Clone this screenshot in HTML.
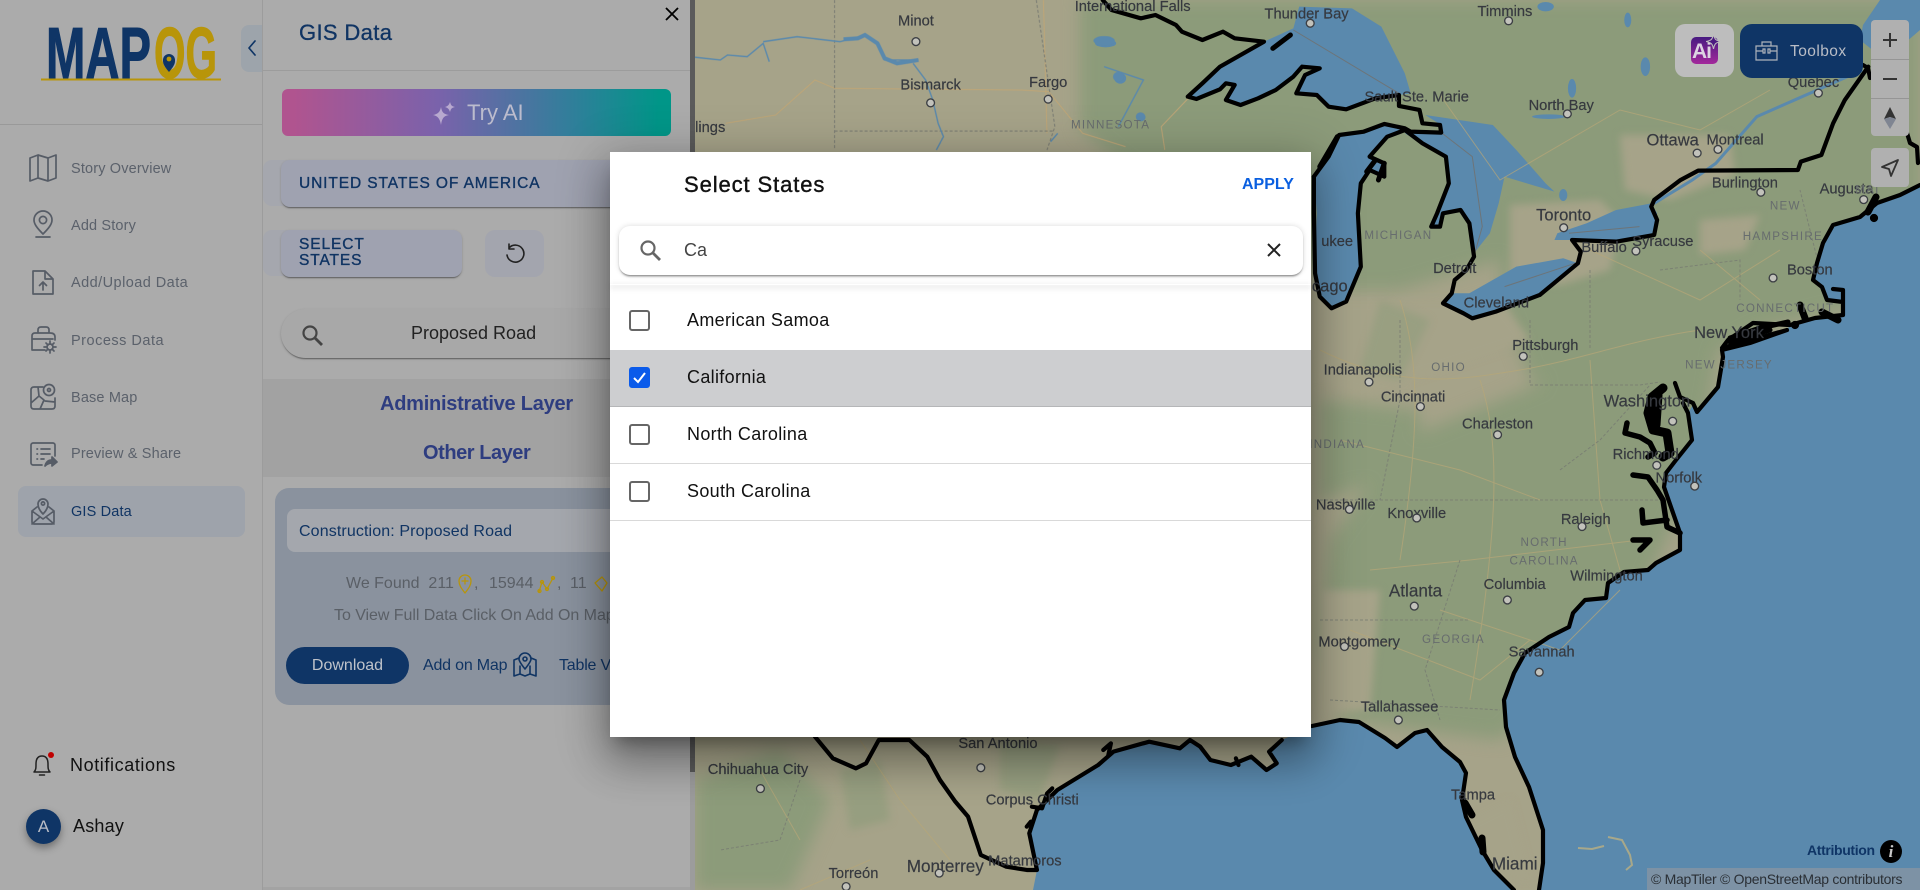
<!DOCTYPE html>
<html><head><meta charset="utf-8"><title>MAPOG GIS Data</title>
<style>
*{box-sizing:border-box}
html,body{margin:0;padding:0;width:1920px;height:890px;overflow:hidden;background:#ababab;font-family:"Liberation Sans",sans-serif}
.a{position:absolute}
.t{position:absolute;white-space:nowrap;line-height:24px;height:24px}
.nav{color:#5b616b;font-size:14.5px;left:71px;letter-spacing:.15px}
svg.i{position:absolute;fill:none;stroke:#565c66;stroke-width:1.7;stroke-linecap:round;stroke-linejoin:round}
.btn{position:absolute;background:#9fa2b0;border-radius:9px;box-shadow:0 2px 1px -1px #666,0 1px 2px #888}
.sl{position:absolute;background:#a5a7ae;border-radius:9px 0 0 9px}
.st{color:#103463;font-size:15.5px;-webkit-text-stroke:.35px #103463;letter-spacing:.9px}
.cb{position:absolute;left:629px;width:21px;height:21px;border:2px solid #666;border-radius:3px;background:#fff}
.row{position:absolute;left:610px;width:701px;height:57px;border-bottom:1px solid #d9d9d9}
.rt{left:687px;font-size:18px;color:#111;letter-spacing:.32px}
svg text{font-family:"Liberation Sans",sans-serif}
.c{font-size:12px;fill:#36393f;text-anchor:middle;stroke:#36393f;stroke-width:.15px}
.s{font-size:9.5px;fill:#676c6e;text-anchor:middle;letter-spacing:1px}
</style></head><body>

<svg class="a" style="left:0;top:0" width="1920" height="890" viewBox="0 0 1920 890">
<defs>
<filter id="b" x="-20%" y="-20%" width="140%" height="140%" color-interpolation-filters="sRGB"><feGaussianBlur stdDeviation="8"/></filter>
<filter id="b2" x="-20%" y="-20%" width="140%" height="140%" color-interpolation-filters="sRGB"><feGaussianBlur stdDeviation="4"/></filter>
</defs>
<rect x="695" y="0" width="1225" height="890" fill="#a6a389"/>
<g filter="url(#b)" fill="#8c9b7a">
<path d="M1080 0H1920V290L1760 330L1640 390L1530 380L1500 300L1500 260L1400 290L1330 290L1240 190L1130 170L1080 130Z"/>
<path d="M1400 440L1500 400L1620 350L1720 340L1700 460L1640 600L1560 680L1520 720L1500 740L1340 720L1320 640L1330 540Z"/>
<path d="M695 780L780 750L830 800L790 890H695Z"/>
<path d="M1320 400L1420 410L1420 470L1320 500Z"/>
</g>
<g filter="url(#b2)" fill="#a6a389">
<path d="M1510 205L1600 200L1620 220L1610 270L1560 285L1510 280Z"/>
<path d="M1620 135L1730 135L1735 175L1670 200L1625 190Z"/>
<path d="M1330 300L1500 300L1530 340L1440 370L1360 395L1320 380Z"/>
<path d="M1320 590L1380 590L1370 710L1320 715Z"/>
<path d="M1450 830L1510 800L1530 880L1470 870Z"/>
<path d="M1700 220L1760 215L1745 250L1700 255Z"/>
</g>
<g filter="url(#b2)" fill="#8c9b7a">
<path d="M1000 740L1060 745L1040 800L1000 790Z" opacity=".6"/>
<path d="M840 770L880 760L890 820L850 830Z" opacity=".6"/>
<path d="M1380 300L1430 320L1400 380L1360 370Z" opacity=".5"/>
</g>
<!-- oceans -->
<path fill="#5a89ad" d="M1920 185L1900 195L1877 203L1860 217L1833 225L1823 243L1817 263L1813 280L1822 287L1827 300L1843 302L1843 315L1815 318L1790 325L1787 330L1750 343L1722 350L1723 357L1718 387L1697 412L1693 405L1688 413L1692 440L1676 460L1666 473L1664 487L1672 510L1680 533L1680 550L1656 563L1648 570L1624 572L1608 583L1606 598L1585 600L1573 613L1569 627L1549 637L1525 653L1514 673L1504 700L1506 727L1515 757L1529 787L1543 830L1543 863L1539 890H1920Z"/>
<path fill="#5a89ad" d="M1514 890L1494 870L1482 850L1466 817L1462 800L1466 773L1460 762L1442 747L1427 730L1415 733L1397 747L1385 738L1359 722L1340 720L1312 726L1282 740L1269 752L1277 763L1267 770L1251 757L1231 765L1210 760L1200 747L1190 740L1180 748L1149 742L1113 752L1098 765L1057 790L1037 810L1029 833L1037 870L1033 890Z"/>
<path fill="#5a89ad" d="M1880 0H1920V30L1885 60L1860 40L1863 25Z"/>

<g transform="translate(1000,0) scale(.5867,.3333)">
<path fill="#5a89ad" d="M450 125L500 85L510 20L600 25L650 80L690 220L700 280L680 285L640 295L590 328L560 320L540 285L505 280L520 225L545 205L515 200L500 230L470 270L440 295L410 315L385 300L400 255L385 250L375 268L335 297L320 290L345 250L375 200L420 155Z"/>
<path fill="#5a89ad" d="M725 345L840 375L880 450L930 550L945 575L860 530L850 610L835 700L810 755L800 670L785 630L755 640L745 680L735 680L745 640L765 550L760 470L720 430L690 400L752 398L752 375Z"/>
<path fill="#5a89ad" d="M578 405L620 395L655 372L690 385L660 410L630 470L655 490L655 530L630 510L615 550L610 640L615 800L590 905L565 925L545 890L535 820L540 640L535 530L560 470Z"/>
<path fill="#5a89ad" d="M805 955L845 935L920 885L985 790L960 775L880 800L800 880L770 880L755 910L790 940Z"/>
<path fill="#5a89ad" d="M945 720L975 720L1050 725L1115 705L1120 640L1110 610L1050 630L1000 670L950 700Z"/>
<path fill="none" stroke="#5a89ad" stroke-width="3" vector-effect="non-scaling-stroke" d="M1115 610L1180 540L1220 490L1290 350L1380 280L1470 210"/>
<g fill="#5a89ad"><ellipse cx="180" cy="130" rx="18" ry="12"/><ellipse cx="205" cy="235" rx="10" ry="16"/><ellipse cx="240" cy="352" rx="8" ry="12"/><ellipse cx="935" cy="350" rx="28" ry="7"/><ellipse cx="1100" cy="200" rx="8" ry="28"/><ellipse cx="975" cy="265" rx="7" ry="28"/><ellipse cx="960" cy="585" rx="7" ry="18"/><ellipse cx="1070" cy="60" rx="6" ry="22"/><ellipse cx="930" cy="20" rx="14" ry="14"/></g>
<path fill="none" stroke="#6d7478" stroke-width="1" vector-effect="non-scaling-stroke" d="M500 90L680 280M750 395L805 470L822 680L810 755M970 700L1090 680M860 860L980 790"/>
</g>

<!-- roads & borders -->
<g transform="translate(690,0) scale(.357,.3333)" fill="none">
<path stroke="#bfa677" stroke-width="1" vector-effect="non-scaling-stroke" d="M100 370L240 345L350 240L405 265L930 270L1005 275L1100 400L1220 440M990 0L1000 400M1330 450L1320 380L1400 290"/>
<path stroke="#7a7c74" stroke-width="1" stroke-dasharray="3 2" vector-effect="non-scaling-stroke" d="M405 0V450M405 393H1020M970 0L1022 380L1000 450"/>
<path stroke="#5a89ad" stroke-width="1.4" vector-effect="non-scaling-stroke" d="M0 170L85 180L105 165L160 170L205 130L222 185M205 125L300 110L420 125L490 105L525 130L545 180L640 180M625 190L660 240L680 300L695 370L710 410L690 450M1010 425L1030 400M1160 200L1270 240L1200 380"/>
<path stroke="#5a89ad" stroke-width="4" vector-effect="non-scaling-stroke" d="M430 118L470 115L490 105L525 130L545 175L580 190L640 180"/>
<g fill="#5a89ad"><ellipse cx="1160" cy="122" rx="30" ry="14"/><ellipse cx="1200" cy="230" rx="15" ry="15"/><ellipse cx="1262" cy="350" rx="13" ry="13"/></g>
</g>
<g fill="none" stroke="#b7a678" stroke-width="1" opacity=".7">
<path d="M1320 350C1400 390 1460 380 1520 370S1630 340 1700 330M1400 300C1420 360 1420 430 1400 560M1340 440L1460 470L1540 500M1370 570L1470 560L1640 540M1480 380C1500 440 1500 520 1470 700M1440 610L1560 650L1620 590M1590 360L1600 500L1620 570M1700 250L1760 300M1590 250L1700 300L1780 250M1350 630L1480 680L1530 640"/>
<path d="M1440 95L1500 180L1620 110L1700 130L1770 90"/>
<path d="M860 740L900 800L950 860M800 890L870 860M760 770L800 840"/>
</g>
<g fill="none" stroke="#777b72" stroke-width="1" stroke-dasharray="3 2" opacity=".8">
<path d="M1400 320V400L1380 500M1320 500H1670M1530 320V385L1640 385L1660 382M1320 620H1470M1330 700L1500 710M1590 270V350M1560 470L1600 440L1650 385M1460 560L1425 670L1440 720"/>
<path d="M1660 270L1740 260V300M1820 270L1800 190M800 780L780 840L720 850"/>
</g>

<!-- black borders -->
<g fill="none" stroke="#000" stroke-width="4.2" stroke-linejoin="round" stroke-linecap="round">
<g transform="translate(1000,0) scale(.5867,.3333)">
<path vector-effect="non-scaling-stroke" d="M175 0L190 30L240 55L265 45L300 75L310 95L345 120L380 95L400 115L450 125L420 155L375 200L345 250L320 290L335 297L375 268L385 250L400 255L385 300L410 315L440 295L470 270L500 230L515 200L545 205L520 225L505 280L540 285L560 320L590 328L640 295L680 285L680 318L715 330L720 370L750 375L752 398L700 395L690 385L655 372L620 395L578 405L560 470L535 530"/>
<path vector-effect="non-scaling-stroke" d="M535 530V640L537 820L545 890L565 925L590 905L615 800L610 640L615 550L630 510L655 530L655 490L630 470L660 410L690 390L720 430L760 470L765 550L745 640L735 680L750 680L755 640L785 630L800 670L808 770L795 810L775 840L770 880L755 910L790 940L805 955L845 935L920 885L985 790L990 755L975 720L1050 725L1115 705L1120 660L1110 620L1115 600L1160 540L1190 512L1360 510L1365 485L1400 465L1420 370L1440 300L1470 225L1480 200"/>
<path vector-effect="non-scaling-stroke" d="M465 145L495 105" stroke-width="5"/>
<path vector-effect="non-scaling-stroke" d="M625 515L640 480M645 540L655 490M575 410L545 500" stroke-width="5"/>
</g>
<path d="M1863 65L1868 68L1870 78M1907 133L1910 143L1917 147L1918 163"/>
<!-- east coast, real coords -->
<path d="M1920 185L1900 195L1877 203L1860 217L1833 225L1823 243L1817 263L1813 280L1822 287L1827 300L1843 302L1843 290L1833 289M1843 302L1843 315L1815 318L1790 325L1753 323L1728 340L1722 348L1787 330L1750 343L1722 350L1723 357L1718 387L1697 412L1693 403L1680 397L1675 383M1683 403L1688 413L1692 440L1676 460L1666 473L1664 487L1672 510L1680 533L1680 550L1656 563L1648 570L1624 572L1608 583L1606 598L1585 600L1573 613L1569 627L1549 637L1525 653L1514 673L1504 700L1506 727L1515 757L1529 787L1543 830L1543 863L1539 890M1514 890L1494 870L1482 850L1466 817L1462 800L1466 773L1460 762L1442 747L1427 730L1415 733L1397 747L1385 738L1359 722L1340 720L1312 726"/>
<path d="M1876 197L1868 212M1800 305L1805 318M1822 312L1838 320" stroke-width="7"/>
<path d="M1730 338L1760 328L1788 322M1730 342L1770 330" stroke-width="5"/>
<path d="M1663 388L1652 397L1648 413L1653 430L1667 433L1670 453L1663 457M1658 395L1656 425" stroke-width="9"/>
<path d="M1627 423L1625 433L1640 437L1650 443L1655 453L1648 457M1633 475L1648 477L1657 490L1663 500L1667 527L1680 533M1642 510L1643 523L1667 520M1633 540L1650 540L1640 550" stroke-width="5.5"/>
<circle cx="1874" cy="218" r="2" fill="#000"/><circle cx="1795" cy="325" r="2" fill="#000"/>
<path d="M1465 803L1472 815M1482 838L1483 852" stroke-width="7"/>
<g transform="translate(690,730) scale(.5102,.3333)">
<path vector-effect="non-scaling-stroke" d="M1160 30L1135 65L1150 100L1130 120L1100 80L1060 105L1020 90L1000 50L980 30L960 55L900 35L830 65L800 105L720 180L680 240L665 310L680 420L660 420L620 410L570 375L545 260L520 215L490 150L465 80L430 30L370 30L345 100L325 115L280 85L245 20"/>
<path vector-effect="non-scaling-stroke" d="M810 60L825 40L820 75M670 230L690 235L700 190L710 175M660 290L668 275M1070 85L1075 105"/>
</g>
</g>

<!-- labels, in 1568-wide coords -->
<g transform="scale(1.2245)">
<g>
<text class="c" x="925" y="9">International Falls</text><text class="c" x="1067" y="15">Thunder Bay</text><text class="c" x="1229" y="13">Timmins</text><text class="c" x="748" y="21">Minot</text><text class="c" x="760" y="73">Bismarck</text><text class="c" x="856" y="71">Fargo</text><text class="c" x="580" y="108">lings</text>
<text class="c" x="1157" y="83">Sault Ste. Marie</text><text class="c" x="1275" y="90">North Bay</text><text class="c" x="1366" y="119" style="font-size:13.5px">Ottawa</text><text class="c" x="1417" y="118">Montreal</text><text class="c" x="1481" y="71">Quebec</text><text class="c" x="1425" y="153">Burlington</text><text class="c" x="1508" y="158">Augusta</text>
<text class="c" x="1277" y="180" style="font-size:13.5px">Toronto</text><text class="c" x="1310" y="206">Buffalo</text><text class="c" x="1358" y="201">Syracuse</text><text class="c" x="1478" y="224">Boston</text><text class="c" x="1412" y="276" style="font-size:13.5px">New York</text><text class="c" x="1262" y="286">Pittsburgh</text><text class="c" x="1222" y="251">Cleveland</text><text class="c" x="1188" y="223">Detroit</text><text class="c" x="1092" y="201">ukee</text><text class="c" x="1086" y="238" style="font-size:13.5px">cago</text>
<text class="c" x="1113" y="306">Indianapolis</text><text class="c" x="1154" y="328">Cincinnati</text><text class="c" x="1345" y="332" style="font-size:13.5px">Washington</text><text class="c" x="1223" y="350">Charleston</text><text class="c" x="1344" y="375">Richmond</text><text class="c" x="1371" y="394">Norfolk</text><text class="c" x="1099" y="416">Nashville</text><text class="c" x="1157" y="423">Knoxville</text><text class="c" x="1295" y="428">Raleigh</text><text class="c" x="1312" y="474">Wilmington</text><text class="c" x="1237" y="481">Columbia</text><text class="c" x="1156" y="487" style="font-size:14px">Atlanta</text><text class="c" x="1259" y="536">Savannah</text><text class="c" x="1110" y="528">Montgomery</text><text class="c" x="1143" y="581">Tallahassee</text><text class="c" x="1203" y="653">Tampa</text><text class="c" x="1237" y="710" style="font-size:14px">Miami</text><text class="c" x="815" y="611">San Antonio</text><text class="c" x="619" y="632">Chihuahua City</text><text class="c" x="843" y="657">Corpus Christi</text><text class="c" x="837" y="707">Matamoros</text><text class="c" x="772" y="712" style="font-size:14px">Monterrey</text><text class="c" x="697" y="717">Torreón</text>
<text class="s" x="907" y="105">MINNESOTA</text><text class="s" x="1142" y="195">MICHIGAN</text><text class="s" x="1458" y="171">NEW</text><text class="s" x="1456" y="196">HAMPSHIRE</text><text class="s" x="1458" y="255">CONNECTICUT</text><text class="s" x="1412" y="301">NEW JERSEY</text><text class="s" x="1183" y="303">OHIO</text><text class="s" x="1092" y="366">INDIANA</text><text class="s" x="1261" y="446">NORTH</text><text class="s" x="1261" y="461">CAROLINA</text><text class="s" x="1187" y="525">GEORGIA</text><text class="s" x="1525" y="158">MAI</text>
</g>
<g fill="#c2c2bb" stroke="#3c3f44" stroke-width="1.1">
<circle cx="748" cy="34" r="3.2"/><circle cx="760" cy="84" r="3.2"/><circle cx="856" cy="81" r="3.2"/><circle cx="563" cy="113" r="3.2"/><circle cx="1070" cy="19" r="3.2"/><circle cx="1232" cy="17" r="3.2"/><circle cx="1280" cy="93" r="3.2"/>
<circle cx="1386" cy="125" r="3.2"/><circle cx="1403" cy="122" r="3.2"/><circle cx="1485" cy="76" r="3.2"/><circle cx="1438" cy="157" r="3.2"/><circle cx="1522" cy="163" r="3.2"/>
<circle cx="1277" cy="186" r="3.2"/><circle cx="1336" cy="205" r="3.2"/><circle cx="1448" cy="227" r="3.2"/><circle cx="1244" cy="291" r="3.2"/>
<circle cx="1118" cy="312" r="3.2"/><circle cx="1160" cy="332" r="3.2"/><circle cx="1366" cy="344" r="3.2"/><circle cx="1223" cy="355" r="3.2"/><circle cx="1353" cy="380" r="3.2"/><circle cx="1384" cy="397" r="3.2"/><circle cx="1102" cy="416" r="3.2"/><circle cx="1157" cy="423" r="3.2"/><circle cx="1292" cy="430" r="3.2"/><circle cx="1231" cy="490" r="3.2"/><circle cx="1155" cy="495" r="3.2"/><circle cx="1098" cy="528" r="3.2"/><circle cx="1257" cy="549" r="3.2"/><circle cx="1142" cy="588" r="3.2"/>
<circle cx="801" cy="627" r="3.2"/><circle cx="621" cy="644" r="3.2"/><circle cx="767" cy="713" r="3.2"/><circle cx="691" cy="724" r="3.2"/>
</g>
</g>
<!-- Bahamas -->
<path d="M1578 848L1592 849L1604 846M1608 837L1622 840L1630 855L1632 865L1626 870" fill="none" stroke="#a8a88a" stroke-width="2"/>
</svg>

<!-- scrollbar -->
<div class="a" style="left:690px;top:0;width:5px;height:890px;background:#9c9c9c"></div>
<div class="a" style="left:690px;top:0;width:5px;height:772px;background:#5b5b5b"></div>
<!-- panels -->
<div class="a" style="left:0;top:0;width:690px;height:890px;background:#ababab"></div>
<div class="a" style="left:262px;top:0;width:1px;height:890px;background:#9c9c9c"></div>
<div class="a" style="left:0;top:124px;width:262px;height:1px;background:#999"></div>
<div class="a" style="left:263px;top:70px;width:427px;height:1px;background:#9c9c9c"></div>
<div class="a" style="left:263px;top:887px;width:427px;height:3px;background:#a3a3a3"></div>

<!-- logo -->
<svg class="a" style="left:36px;top:20px" width="190" height="66" viewBox="36 20 190 66">
<text x="46" y="78" font-size="72" font-weight="700" fill="#0f3566" stroke="#0f3566" stroke-width="1" textLength="105" lengthAdjust="spacingAndGlyphs">MAP</text>
<text x="154" y="78" font-size="72" font-weight="700" fill="#b8950a" stroke="#b8950a" stroke-width="1" textLength="63" lengthAdjust="spacingAndGlyphs">OG</text>
<path d="M169 72C163 65 163 63 163 60A6 6 0 0 1 175 60C175 63 175 65 169 72Z" fill="#0f3566"/><circle cx="169" cy="59" r="2.4" fill="#b8950a"/>
<path d="M41 79.5H221" stroke="#b8950a" stroke-width="2"/>
</svg>
<div class="a" style="left:241px;top:25px;width:21px;height:47px;background:#9da4ab;border-radius:8px 0 0 8px"></div>
<svg class="i" style="left:246px;top:40px;stroke:#0f3566" width="12" height="16" viewBox="0 0 12 16"><path d="M9 1L3 8L9 15"/></svg>

<!-- nav -->
<svg class="i" style="left:28px;top:153px" width="30" height="30" viewBox="0 0 30 30"><path d="M2 5L10 2L20 5L28 2V25L20 28L10 25L2 28ZM10 2V25M20 5V28"/></svg>
<div class="t nav" style="top:157px">Story Overview</div>
<svg class="i" style="left:28px;top:210px" width="30" height="30" viewBox="0 0 30 30"><path d="M15 24C9 18 6 14 6 10A9 9 0 0 1 24 10C24 14 21 18 15 24ZM8 27H22"/><circle cx="15" cy="10" r="3.6"/></svg>
<div class="t nav" style="top:214px">Add Story</div>
<svg class="i" style="left:28px;top:267px" width="30" height="30" viewBox="0 0 30 30"><path d="M5 4H17L25 12V27H5ZM17 4V12H25M15 23V15M11.5 18.5L15 15L18.5 18.5"/></svg>
<div class="t nav" style="top:271px;letter-spacing:.45px">Add/Upload Data</div>
<svg class="i" style="left:28px;top:325px" width="30" height="30" viewBox="0 0 30 30"><path d="M17 25H4V11C4 9 5 8 7 8H22C25 8 27 9 27 12V15M4 14H25M10 8V5C10 3 11 2 13 2H18C20 2 21 3 21 5V8"/><circle cx="22" cy="22" r="3"/><path d="M22 16V19M22 25V28M16 22H19M25 22H28M18 18L20 20M24 24L26 26M26 18L24 20M20 24L18 26"/></svg>
<div class="t nav" style="top:329px;letter-spacing:.5px">Process Data</div>
<svg class="i" style="left:28px;top:382px" width="30" height="30" viewBox="0 0 30 30"><path d="M15 5H6C4 5 3 6 3 8V24C3 26 4 27 6 27H24C26 27 27 26 27 24V16M3 21L11 14L16 18L12 27M17 19L27 20M10 5L11 14"/><circle cx="21" cy="8" r="5.5"/><circle cx="21" cy="8" r="1.5"/></svg>
<div class="t nav" style="top:386px">Base Map</div>
<svg class="i" style="left:28px;top:439px" width="30" height="30" viewBox="0 0 30 30"><path d="M14 26H5C4 26 3 25 3 24V6C3 5 4 4 5 4H25C26 4 27 5 27 6V17M9 10H9.5M9 15H9.5M9 20H9.5M13 10H22M13 15H22M13 20H16"/><path d="M17 27C18 23 20 21 24 21V18L29 23L24 27V24C21 24 19 25 17 27Z" fill="#565c66"/></svg>
<div class="t nav" style="top:442px">Preview &amp; Share</div>
<div class="a" style="left:18px;top:486px;width:227px;height:51px;background:#9ea3ab;border-radius:8px"></div>
<svg class="i" style="left:28px;top:496px" width="30" height="30" viewBox="0 0 30 30"><path d="M9 11L4 15V26C4 27 5 28 6 28H24C25 28 26 27 26 26V15L21 11M4 15L15 23L26 15M4 28L12 21M26 28L18 21M15 18C11 14 10 11 10 8A5 5 0 0 1 20 8C20 11 19 14 15 18Z"/><circle cx="15" cy="7.5" r="1.6"/></svg>
<div class="t nav" style="top:500px;color:#103463">GIS Data</div>

<svg class="i" style="left:28px;top:750px;stroke:#222;stroke-width:1.5" width="28" height="30" viewBox="0 0 28 30"><path d="M6 22C8 20 8 18 8 14C8 9 10 6 14 6S20 9 20 14C20 18 20 20 22 22ZM11.5 25H16.5"/></svg>
<div class="a" style="left:48px;top:752px;width:6px;height:6px;border-radius:50%;background:#c00000"></div>
<div class="t" style="left:70px;top:753px;font-size:18px;color:#111;letter-spacing:.6px">Notifications</div>
<div class="a" style="left:26px;top:809px;width:35px;height:35px;border-radius:50%;background:#0f3566;color:#b9bdc6;font-size:17px;line-height:35px;text-align:center;box-shadow:0 4px 8px rgba(0,0,0,.35)">A</div>
<div class="t" style="left:73px;top:814px;font-size:18px;color:#111;letter-spacing:.2px">Ashay</div>

<!-- panel contents -->
<div class="t" style="left:299px;top:21px;font-size:22px;color:#103463;letter-spacing:.35px;-webkit-text-stroke:.3px #103463">GIS Data</div>
<svg class="a" style="left:664px;top:6px" width="16" height="16" viewBox="0 0 16 16"><path d="M2 2L14 14M14 2L2 14" stroke="#000" stroke-width="1.8"/></svg>
<div class="a" style="left:282px;top:89px;width:389px;height:47px;border-radius:6px;background:linear-gradient(90deg,#b0548f 3%,#7a62ab 40%,#2f7f9a 75%,#009688 97%)"></div>
<svg class="a" style="left:431px;top:101px" width="26" height="26" viewBox="0 0 26 26" fill="#b8a9cf"><path d="M10 6C11 11 12 13 18 14C12 15 11 18 10 24C9 18 7 15 2 14C7 13 9 11 10 6Z"/><path d="M19 1C20 4 20 5 24 6C20 7 20 8 19 11C18 8 17 7 14 6C17 5 18 4 19 1Z"/></svg>
<div class="t" style="left:467px;top:101px;font-size:22px;color:#bcbccd">Try AI</div>

<div class="sl" style="left:263px;top:160px;width:30px;height:46px"></div>
<div class="btn" style="left:281px;top:160px;width:360px;height:47px"></div>
<div class="t st" style="left:299px;top:172px">UNITED STATES OF AMERICA</div>
<div class="sl" style="left:263px;top:230px;width:30px;height:46px"></div>
<div class="btn" style="left:281px;top:230px;width:181px;height:47px"></div>
<div class="t st" style="left:299px;top:237px;line-height:16px;height:32px">SELECT<br>STATES</div>
<div class="a" style="left:485px;top:230px;width:59px;height:47px;background:#a3a5ae;border-radius:10px"></div>
<svg class="i" style="left:503px;top:243px;stroke:#222;stroke-width:1.6" width="24" height="24" viewBox="0 0 24 24"><path d="M6 5A8.5 8.5 0 1 1 4 12M6 1V6H11"/></svg>

<div class="a" style="left:281px;top:309px;width:360px;height:49px;border-radius:25px;background:#a8a8a8;box-shadow:0 2px 1px -1px #666,0 1px 2px #888"></div>
<svg class="a" style="left:300px;top:323px" width="24" height="24" viewBox="0 0 24 24" fill="none" stroke="#444" stroke-width="2.2"><circle cx="10" cy="10" r="6.5"/><path d="M15 15L22 22" stroke-width="2.8"/></svg>
<div class="t" style="left:411px;top:321px;font-size:18px;color:#222">Proposed Road</div>

<div class="a" style="left:263px;top:379px;width:427px;height:98px;background:#a2a2a2"></div>
<div class="t" style="left:380px;top:392px;font-size:20px;font-weight:700;color:#2e3d80;letter-spacing:-.25px">Administrative Layer</div>
<div class="t" style="left:423px;top:441px;font-size:20px;font-weight:700;color:#2e3d80;letter-spacing:-.45px">Other Layer</div>

<div class="a" style="left:275px;top:488px;width:400px;height:217px;background:#8a929e;border-radius:14px"></div>
<div class="a" style="left:287px;top:509px;width:370px;height:43px;background:#a4a7ad;border-radius:8px"></div>
<div class="t" style="left:299px;top:520px;font-size:16px;color:#103463;letter-spacing:.12px">Construction: Proposed Road</div>
<div class="t" style="left:346px;top:572px;font-size:16px;color:#5a5f66">We Found&nbsp; 211</div>
<svg class="i" style="left:456px;top:573px;stroke:#b8950a;stroke-width:1.3" width="18" height="22" viewBox="0 0 18 22"><path d="M9 20C5 15 3 12 3 8A6 6 0 0 1 15 8C15 12 13 15 9 20ZM9 5V11M6 8H12"/></svg>
<div class="t" style="left:474px;top:572px;font-size:16px;color:#5a5f66">,</div>
<div class="t" style="left:489px;top:572px;font-size:16px;color:#5a5f66">15944</div>
<svg class="i" style="left:537px;top:574px;stroke:#b8950a;stroke-width:1.3" width="20" height="20" viewBox="0 0 20 20"><path d="M2 18L5 8L10 15L16 4"/><circle cx="2.5" cy="17" r="1.5"/><circle cx="5" cy="8" r="1.5"/><circle cx="10" cy="15" r="1.5"/><circle cx="16" cy="4" r="1.5"/></svg>
<div class="t" style="left:557px;top:572px;font-size:16px;color:#5a5f66">,</div>
<div class="t" style="left:570px;top:572px;font-size:16px;color:#5a5f66">11</div>
<svg class="i" style="left:592px;top:575px;stroke:#b8950a;stroke-width:1.3" width="18" height="18" viewBox="0 0 18 18"><path d="M3 8L10 2L15 8L10 16Z"/></svg>
<div class="t" style="left:334px;top:604px;font-size:16px;color:#5a5f66;letter-spacing:-.05px">To View Full Data Click On Add On Map</div>
<div class="a" style="left:286px;top:647px;width:123px;height:37px;border-radius:19px;background:#0f3566;color:#bfc3ca;font-size:16px;line-height:37px;text-align:center">Download</div>
<div class="t" style="left:423px;top:654px;font-size:16px;color:#103463;letter-spacing:-.2px">Add on Map</div>
<svg class="i" style="left:512px;top:652px;stroke:#103463;stroke-width:1.6" width="26" height="26" viewBox="0 0 26 26"><path d="M7 6L2 8V24L8 22L13 24L18 22L24 24V8L19 6M8 22V14M18 22V14M13 17C9 12 7 9 7 7A6 6 0 0 1 19 7C19 9 17 12 13 17Z"/><circle cx="13" cy="7" r="2"/></svg>
<div class="t" style="left:559px;top:654px;font-size:16px;color:#103463;letter-spacing:-.2px">Table View</div>

<!-- top right controls -->
<div class="a" style="left:1675px;top:24px;width:59px;height:53px;background:#bdbdbd;border-radius:10px"></div>
<div class="a" style="left:1691px;top:37px;width:27px;height:27px;border-radius:5px;background:linear-gradient(180deg,#481a80,#a3289b);color:#ddd3e2;font-size:21px;font-weight:700;line-height:30px;padding-left:1px;letter-spacing:-1px">Ai</div>
<svg class="a" style="left:1706px;top:34px" width="15" height="15" viewBox="0 0 14 14"><path d="M7 0C8 5 9 6 14 7C9 8 8 9 7 14C6 9 5 8 0 7C5 6 6 5 7 0Z" fill="#4b1a80" stroke="#bdbdbd" stroke-width="1"/></svg>
<div class="a" style="left:1740px;top:24px;width:123px;height:54px;background:#0f3566;border-radius:12px"></div>
<svg class="a" style="left:1755px;top:41px" width="23" height="20" viewBox="0 0 23 20" fill="none" stroke="#aeb3bb" stroke-width="1.2"><path d="M1 5H22V19H1ZM7 5V1H16V5M1 10H8M15 10H22M8 8H10V12H8ZM13 8H15V12H13Z"/></svg>
<div class="t" style="left:1790px;top:40px;font-size:15.5px;color:#b9bdc6;letter-spacing:.45px">Toolbox</div>

<div class="a" style="left:1871px;top:20px;width:38px;height:116px;background:#b0b0b0;border-radius:4px"></div>
<div class="a" style="left:1871px;top:59px;width:38px;height:1px;background:#959595"></div>
<div class="a" style="left:1871px;top:98px;width:38px;height:1px;background:#959595"></div>
<svg class="a" style="left:1871px;top:20px" width="38" height="116" viewBox="0 0 38 116"><path d="M19 13V27M12 20H26M12 59H26" stroke="#333" stroke-width="2"/><path d="M19 87L13 99L19 97L25 99Z" fill="#333"/><path d="M13 99L19 97L25 99L19 109Z" fill="#7f8592"/></svg>
<div class="a" style="left:1871px;top:148px;width:38px;height:39px;background:#b0b0b0;border-radius:4px"></div>
<svg class="a" style="left:1880px;top:158px" width="20" height="20" viewBox="0 0 20 20"><path d="M18 2L2 9L9 11L11 18Z" fill="none" stroke="#333" stroke-width="1.8" stroke-linejoin="round"/></svg>

<div class="t" style="left:1807px;top:838px;font-size:14px;font-weight:700;color:#0f3566;letter-spacing:-.35px">Attribution</div>
<div class="a" style="left:1880px;top:840px;width:22px;height:23px;border-radius:50%;background:#000;color:#c8c8c8;font:italic 700 17px/23px 'Liberation Serif',serif;text-align:center">i</div>
<div class="a" style="left:1647px;top:868px;width:273px;height:22px;background:#7d92a5;color:#2a2f35;font-size:14px;line-height:22px;padding-left:4px;white-space:nowrap;letter-spacing:-.28px">© MapTiler © OpenStreetMap contributors</div>

<!-- modal -->
<div class="a" style="left:610px;top:152px;width:701px;height:585px;background:#fff;box-shadow:0 11px 15px -7px rgba(0,0,0,.3),0 24px 38px 3px rgba(0,0,0,.24),0 9px 46px 8px rgba(0,0,0,.2)"></div>
<div class="t" style="left:684px;top:173px;font-size:22px;color:#111;-webkit-text-stroke:.4px #111;letter-spacing:.9px">Select States</div>
<div class="t" style="left:1242px;top:173px;font-size:16px;font-weight:700;color:#0a5fe0">APPLY</div>
<div class="a" style="left:610px;top:284px;width:701px;height:1px;box-shadow:0 2px 6px rgba(0,0,0,.35)"></div>
<div class="a" style="left:619px;top:226px;width:684px;height:49px;background:#fff;border-radius:11px;box-shadow:0 2px 2px -1px #777,0 0 6px rgba(0,0,0,.15)"></div>
<svg class="a" style="left:638px;top:238px" width="24" height="24" viewBox="0 0 24 24" fill="none" stroke="#666" stroke-width="2.2"><circle cx="10" cy="10" r="6.5"/><path d="M15 15L22 22" stroke-width="2.8"/></svg>
<div class="t" style="left:684px;top:238px;font-size:18px;color:#444">Ca</div>
<svg class="a" style="left:1266px;top:242px" width="16" height="16" viewBox="0 0 16 16"><path d="M2 2L14 14M14 2L2 14" stroke="#222" stroke-width="2"/></svg>

<div class="row" style="top:350px;background:#cdced0;border-bottom:1px solid #b5b6b8"></div>
<div class="row" style="top:407px"></div>
<div class="row" style="top:464px"></div>
<div class="cb" style="top:310px"></div><div class="t rt" style="top:308px">American Samoa</div>
<div class="cb" style="top:367px;background:#0b5bea;border-color:#0b5bea"></div>
<svg class="a" style="left:631px;top:369px" width="17" height="17" viewBox="0 0 17 17"><path d="M3 9L7 13L14 4" fill="none" stroke="#fff" stroke-width="2"/></svg>
<div class="t rt" style="top:365px">California</div>
<div class="cb" style="top:424px"></div><div class="t rt" style="top:422px">North Carolina</div>
<div class="cb" style="top:481px"></div><div class="t rt" style="top:479px">South Carolina</div>
</body></html>
